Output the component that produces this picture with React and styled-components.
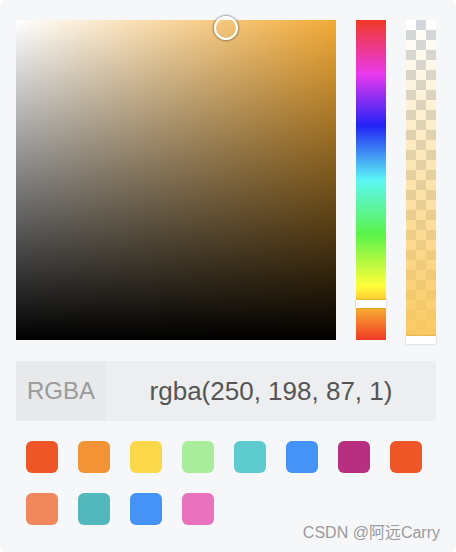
import React from "react";
import styled, { createGlobalStyle } from "styled-components";

const GlobalStyle = createGlobalStyle`
  html, body {
    margin: 0;
    background: #fff;
    font-family: "Liberation Sans", Arial, sans-serif;
  }
`;

const Card = styled.div`
  width: 456px;
  height: 552px;
  box-sizing: border-box;
  background: #f6f7f9;
  border-radius: 8px;
  padding: 20px 20px 0 16px;
  display: flex;
  flex-direction: column;
  position: relative;
`;

const Pickers = styled.div`
  display: flex;
  gap: 20px;
  height: 320px;
`;

const SatPanel = styled.div`
  position: relative;
  width: 320px;
  height: 320px;
  background: linear-gradient(to top, #000, rgba(0, 0, 0, 0)),
    linear-gradient(to right, #fff, rgba(255, 255, 255, 0)), ${(p) => p.$hue};
`;

const SatThumb = styled.div`
  position: absolute;
  left: 198px;
  top: -4px;
  width: 20px;
  height: 20px;
  border: 2px solid #fff;
  border-radius: 50%;
  box-shadow: 0 0 2px 1px rgba(0, 0, 0, 0.35);
`;

const Bar = styled.div`
  position: relative;
  width: 30px;
  height: 320px;
`;

const HueBar = styled(Bar)`
  background: linear-gradient(
    to top,
    #f03a26 0%,
    #ffff3a 17%,
    #5cf34a 33%,
    #5cf7f5 50%,
    #2222f5 67%,
    #ea39ee 83%,
    #f03a26 100%
  );
`;

const AlphaBar = styled(Bar)`
  background-color: #fff;
  background-image: linear-gradient(45deg, #d3d8de 25%, transparent 25%, transparent 75%, #d3d8de 75%),
    linear-gradient(45deg, #d3d8de 25%, transparent 25%, transparent 75%, #d3d8de 75%);
  background-size: 20px 20px;
  background-position: 0 0, 10px 10px;
`;

const AlphaFill = styled.div`
  position: absolute;
  inset: 0;
  background: linear-gradient(to bottom, rgba(250, 198, 87, 0), rgba(250, 198, 87, 0.95));
`;

const BarThumb = styled.div`
  position: absolute;
  left: 0;
  top: ${(p) => p.$top}px;
  width: 30px;
  height: 8px;
  background: #fff;
  box-shadow: 0 0 2px rgba(0, 0, 0, 0.3);
`;

const InputRow = styled.div`
  display: flex;
  height: 60px;
  margin-top: 21px;
  width: 420px;
`;

const Label = styled.div`
  width: 90px;
  display: flex;
  align-items: center;
  justify-content: center;
  background: #e8e9eb;
  color: #9a9a9a;
  font-size: 24px;
`;

const Value = styled.div`
  flex: 1;
  display: flex;
  align-items: center;
  justify-content: center;
  background: #edeef0;
  color: #555;
  font-size: 26px;
`;

const Swatches = styled.div`
  display: grid;
  grid-template-columns: repeat(8, 32px);
  gap: 20px;
  padding: 20px 0 0 10px;
`;

const Swatch = styled.div`
  width: 32px;
  height: 32px;
  border-radius: 6px;
  background: ${(p) => p.$color};
`;

const Watermark = styled.div`
  position: absolute;
  right: 16px;
  bottom: 9px;
  color: #9b9b9b;
  font-size: 16px;
  font-family: "Liberation Sans", "Noto Sans CJK SC", sans-serif;
`;

const colors = [
  "#ee5628",
  "#f29336",
  "#fbd84a",
  "#a8ec9c",
  "#5ecbcf",
  "#4593f7",
  "#b62f80",
  "#ee5628",
  "#f0875d",
  "#52b8bc",
  "#4593f7",
  "#e972bf",
];

export default function App() {
  return (
    <>
      <GlobalStyle />
      <Card>
        <Pickers>
          <SatPanel $hue="#f2aa36">
            <SatThumb />
          </SatPanel>
          <HueBar>
            <BarThumb $top={280} />
          </HueBar>
          <AlphaBar>
            <AlphaFill />
            <BarThumb $top={316} />
          </AlphaBar>
        </Pickers>
        <InputRow>
          <Label>RGBA</Label>
          <Value>rgba(250, 198, 87, 1)</Value>
        </InputRow>
        <Swatches>
          {colors.map((c, i) => (
            <Swatch key={i} $color={c} />
          ))}
        </Swatches>
        <Watermark>CSDN @阿远Carry</Watermark>
      </Card>
    </>
  );
}
